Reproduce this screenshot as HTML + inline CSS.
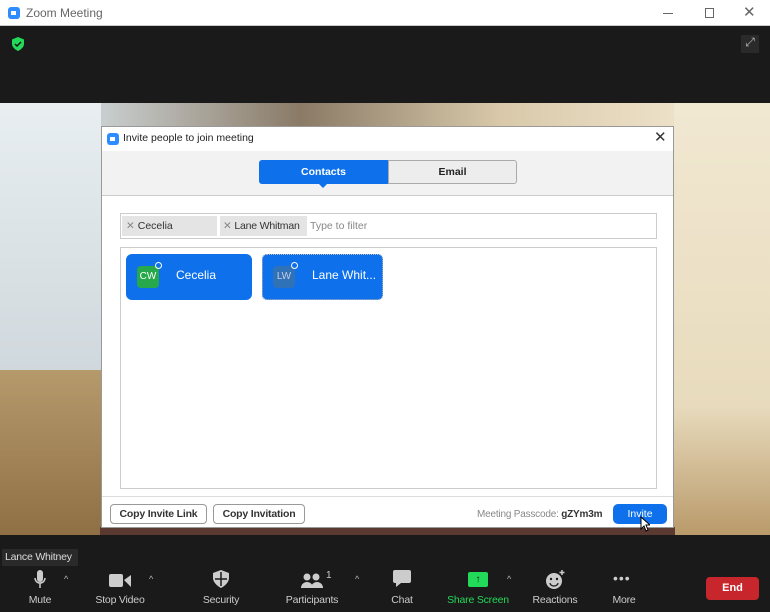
<!DOCTYPE html>
<html><head><style>
*{margin:0;padding:0;box-sizing:border-box}
body{width:770px;height:612px;overflow:hidden;font-family:"Liberation Sans",sans-serif;background:#1a1a1a;position:relative}
.abs{position:absolute;white-space:nowrap}
.tb{left:0;top:0;width:770px;height:26px;background:#fff;border-bottom:1px solid #ccc}
.dlg{left:101px;top:126px;width:573px;height:402px;background:#fff;border:1px solid #999}
.tool{position:absolute;top:568px;text-align:center;color:#ccc;font-size:10.5px;transform:translateX(-50%);white-space:nowrap;letter-spacing:-0.2px}
.ic{position:absolute;top:570px;transform:translateX(-50%)}
.car{position:absolute;top:574px;color:#bbb;font-size:9px}
</style></head><body>
<div class="abs tb">
 <div class="abs" style="left:8px;top:7px;width:12px;height:12px;border-radius:3px;background:#2d8cff"><div style="position:absolute;left:3px;top:4px;width:5px;height:4px;background:#fff"></div></div>
 <div class="abs" style="left:26px;top:6px;font-size:12px;color:#666">Zoom Meeting</div>
 <div class="abs" style="left:663px;top:13px;width:10px;height:1px;background:#666"></div>
 <div class="abs" style="left:705px;top:8px;width:9px;height:10px;border:1px solid #666"></div>
 <div class="abs" style="left:743px;top:3px;font-size:15px;color:#666">✕</div>
</div>
<div class="abs" style="left:0;top:27px;width:770px;height:76px;background:#1a1a1a"></div>
<svg class="abs" style="left:12px;top:37px" width="12" height="14" viewBox="0 0 12 14"><path d="M6 0L12 2.5V7C12 10 9 12.5 6 14C3 12.5 0 10 0 7V2.5Z" fill="#23d959"/><path d="M3 7l2 2 4-4" stroke="#111" stroke-width="1.5" fill="none"/></svg>
<div class="abs" style="left:741px;top:35px;width:18px;height:18px;background:#2a2a2a;color:#bbb;font-size:12px;text-align:center">⤢</div>
<div class="abs" style="left:0;top:103px;width:770px;height:432px;background:linear-gradient(90deg,#dfe6ea 0,#c9cfd0 100px,#8a7a66 300px,#d9c9aa 500px,#efe4cc 700px,#e8dcc2 770px)"></div>
<div class="abs" style="left:0;top:103px;width:101px;height:270px;background:linear-gradient(180deg,#e8eef2,#cfd8dc)"></div>
<div class="abs" style="left:0;top:370px;width:101px;height:165px;background:linear-gradient(180deg,#b59a6c,#8f6f44)"></div>
<div class="abs" style="left:674px;top:103px;width:96px;height:432px;background:linear-gradient(180deg,#f1e8d2,#e8dbbd 70%,#b99a6a)"></div>
<div class="abs" style="left:100px;top:527px;width:575px;height:8px;background:#5a3a30"></div>
<div class="abs dlg">
 <div class="abs" style="left:5px;top:6px;width:12px;height:12px;border-radius:3px;background:#2d8cff"><div style="position:absolute;left:3px;top:4px;width:5px;height:4px;background:#fff"></div></div>
 <div class="abs" style="left:21px;top:5px;font-size:10.5px;color:#222">Invite people to join meeting</div>
 <div class="abs" style="left:552px;top:1px;font-size:15px;color:#333">✕</div>
 <div class="abs" style="left:0;top:24px;width:571px;height:45px;background:#f2f2f2;border-bottom:1px solid #ccc"></div>
 <div class="abs" style="left:157px;top:33px;width:129px;height:24px;background:#0e71eb;color:#fff;font-size:10.5px;font-weight:bold;text-align:center;line-height:24px;border-radius:3px 0 0 3px">Contacts</div>
 <div class="abs" style="left:216px;top:56px;width:0;height:0;border:5px solid transparent;border-top-color:#0e71eb"></div>
 <div class="abs" style="left:286px;top:33px;width:129px;height:24px;background:#ededed;border:1px solid #aaa;color:#222;font-size:10.5px;font-weight:bold;text-align:center;line-height:22px;border-radius:0 3px 3px 0">Email</div>
 <div class="abs" style="left:18px;top:86px;width:537px;height:26px;border:1px solid #ccc"></div>
 <div class="abs" style="left:20px;top:89px;width:95px;height:20px;background:#e4e4e4;font-size:10.5px;color:#333;line-height:20px;padding-left:4px"><span style="color:#888">✕</span> Cecelia</div>
 <div class="abs" style="left:118px;top:89px;width:87px;height:20px;background:#e4e4e4;font-size:10.5px;color:#333;line-height:20px;padding-left:3px;letter-spacing:-0.2px"><span style="color:#888">✕</span> Lane Whitman</div>
 <div class="abs" style="left:208px;top:93px;font-size:10.5px;color:#888">Type to filter</div>
 <div class="abs" style="left:18px;top:120px;width:537px;height:242px;border:1px solid #ccc"></div>
 <div class="abs" style="left:24px;top:127px;width:126px;height:46px;background:#0e71eb;border-radius:6px"></div>
 <div class="abs" style="left:35px;top:139px;width:22px;height:22px;background:#27a84a;border-radius:4px;color:#fff;font-size:10px;text-align:center;line-height:22px">CW</div>
 <div class="abs" style="left:53px;top:135px;width:7px;height:7px;border:1px solid #fff;border-radius:50%"></div>
 <div class="abs" style="left:74px;top:141px;color:#fff;font-size:12px">Cecelia</div>
 <div class="abs" style="left:160px;top:127px;width:121px;height:46px;background:#0e71eb;border-radius:5px;border:1px dotted #bbb"></div>
 <div class="abs" style="left:171px;top:139px;width:22px;height:22px;background:#2f72b8;border-radius:4px;color:#ccd;font-size:10px;text-align:center;line-height:22px">LW</div>
 <div class="abs" style="left:189px;top:135px;width:7px;height:7px;border:1px solid #fff;border-radius:50%"></div>
 <div class="abs" style="left:210px;top:141px;color:#fff;font-size:12px">Lane Whit...</div>
 <div class="abs" style="left:0;top:369px;width:571px;height:1px;background:#ddd"></div>
 <div class="abs" style="left:8px;top:377px;width:97px;height:20px;border:1px solid #999;border-radius:4px;font-size:10.5px;font-weight:bold;color:#333;text-align:center;line-height:18px;letter-spacing:-0.2px">Copy Invite Link</div>
 <div class="abs" style="left:111px;top:377px;width:92px;height:20px;border:1px solid #999;border-radius:4px;font-size:10.5px;font-weight:bold;color:#333;text-align:center;line-height:18px;letter-spacing:-0.2px">Copy Invitation</div>
 <div class="abs" style="left:375px;top:382px;font-size:10px;color:#888;letter-spacing:-0.2px">Meeting Passcode: <b style="color:#333">gZYm3m</b></div>
 <div class="abs" style="left:511px;top:377px;width:54px;height:20px;background:#0e71eb;border-radius:5px;color:#fff;font-size:10.5px;text-align:center;line-height:20px">Invite</div>
 <svg class="abs" style="left:538px;top:389px" width="10" height="16"><path d="M1 1v12l3-3 2 5 2-1-2-5h4z" fill="#fff" stroke="#000"/></svg>
</div>
<div class="abs" style="left:0;top:535px;width:770px;height:77px;background:#1a1a1a"></div>
<div class="abs" style="left:2px;top:549px;width:76px;height:17px;background:#2a2a2a;color:#ddd;font-size:10.5px;line-height:17px;padding-left:3px;letter-spacing:-0.2px">Lance Whitney</div>
<svg class="ic" style="left:40px" width="12" height="20"><rect x="3" y="0" width="6" height="12" rx="3" fill="#ccc"/><path d="M1 8a5 5 0 0010 0M6 13v5" stroke="#ccc" stroke-width="1.5" fill="none"/></svg>
<div class="tool" style="left:40px;top:594px">Mute</div><div class="car" style="left:64px">^</div>
<svg class="ic" style="left:120px;top:574px" width="22" height="13"><rect x="0" y="0" width="14" height="13" rx="2" fill="#ccc"/><path d="M15 6l7-5v12z" fill="#ccc"/></svg>
<div class="tool" style="left:120px;top:594px">Stop Video</div><div class="car" style="left:149px">^</div>
<svg class="ic" style="left:221px" width="16" height="18"><path d="M8 0L16 3V8C16 12 12 16 8 18C4 16 0 12 0 8V3Z" fill="#ccc"/><path d="M8 2v14M2 9h12" stroke="#1a1a1a" stroke-width="1.5"/></svg>
<div class="tool" style="left:221px;top:594px">Security</div>
<svg class="ic" style="left:312px;top:573px" width="22" height="15"><circle cx="6" cy="4" r="3.5" fill="#ccc"/><circle cx="15" cy="4" r="3.5" fill="#ccc"/><path d="M0 15a6 6 0 0112 0zM10 15a6 6 0 0112 0z" fill="#ccc"/></svg>
<div class="abs" style="left:326px;top:570px;color:#ccc;font-size:10px">1</div>
<div class="tool" style="left:312px;top:594px">Participants</div><div class="car" style="left:355px">^</div>
<svg class="ic" style="left:402px" width="18" height="18"><path d="M2 0h14a2 2 0 012 2v9a2 2 0 01-2 2H8l-5 4v-4H2a2 2 0 01-2-2V2a2 2 0 012-2z" fill="#ccc"/></svg>
<div class="tool" style="left:402px;top:594px">Chat</div>
<div class="ic abs" style="left:478px;top:572px;width:20px;height:15px;background:#23d959;border-radius:2px;color:#111;font-size:10px;text-align:center;line-height:15px;font-weight:bold">↑</div>
<div class="tool" style="left:478px;top:594px;color:#23d959">Share Screen</div><div class="car" style="left:507px">^</div>
<svg class="ic" style="left:555px" width="20" height="20"><circle cx="9" cy="11" r="8" fill="#ccc"/><circle cx="6" cy="9" r="1.2" fill="#1a1a1a"/><circle cx="12" cy="9" r="1.2" fill="#1a1a1a"/><path d="M5 13a4 3 0 008 0" stroke="#1a1a1a" fill="none" stroke-width="1.3"/><path d="M17 0v5M14.5 2.5h5" stroke="#ccc" stroke-width="1.5"/></svg>
<div class="tool" style="left:555px;top:594px">Reactions</div>
<div class="abs" style="left:613px;top:570px;color:#ccc;font-size:14px;letter-spacing:1px">•••</div>
<div class="tool" style="left:624px;top:594px">More</div>
<div class="abs" style="left:706px;top:577px;width:53px;height:23px;background:#c8262d;border-radius:4px;color:#fff;font-size:11px;font-weight:bold;text-align:center;line-height:23px">End</div>
</body></html>
